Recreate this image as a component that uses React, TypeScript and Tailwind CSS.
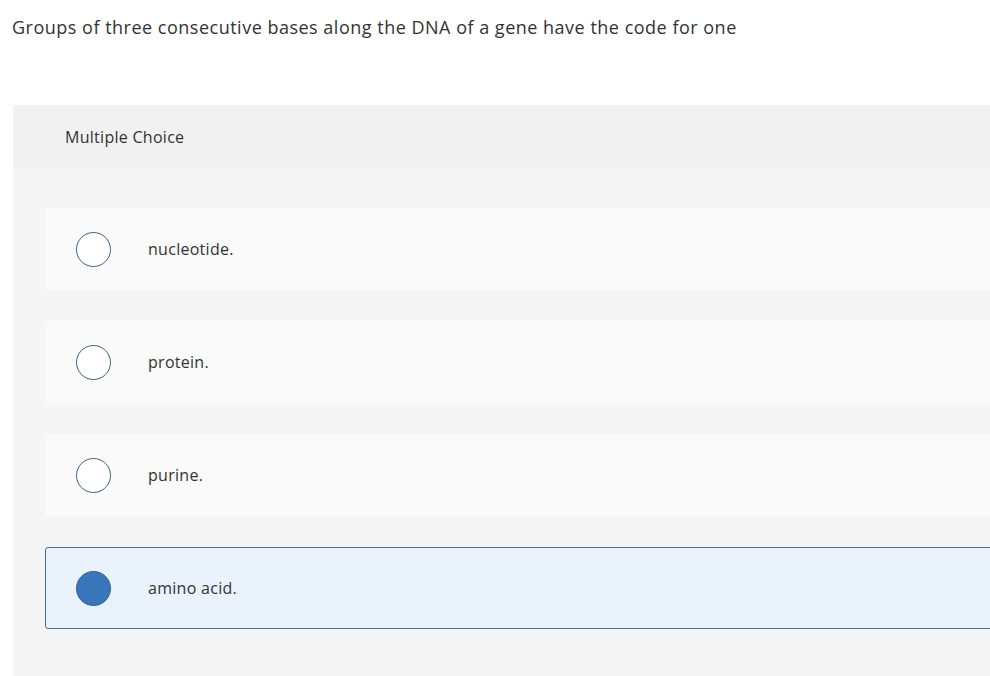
import React from "react";

const options = [
  { label: "nucleotide.", selected: false },
  { label: "protein.", selected: false },
  { label: "purine.", selected: false },
  { label: "amino acid.", selected: true },
];

export default function App() {
  return (
    <div
      className="w-[990px] h-[676px] overflow-hidden bg-white text-[#333]"
      style={{ fontFamily: "'Open Sans', Lato, sans-serif" }}
    >
      <div className="pl-[12px] pt-[14px] text-[18px] leading-[26px] tracking-[0.5px] text-[#333] whitespace-nowrap">
        Groups of three consecutive bases along the DNA of a gene have the code for one
      </div>
      <div className="ml-[13px] mt-[65px] w-[1000px] bg-[#f5f5f5] pb-[60px]">
        <div className="h-[63px] bg-[#f1f1f1] pl-[52px] flex items-center text-[16px] tracking-[0.28px] text-[#333]">
          Multiple Choice
        </div>
        <div className="pl-[32px] pt-[40px] flex flex-col gap-[31px]">
          {options.map((o) => (
            <div
              key={o.label}
              className={
                o.selected
                  ? "h-[82px] flex items-center rounded-[3px] border border-[#4a6f96] bg-[#eaf2fb]"
                  : "h-[82px] flex items-center bg-[#fafafa]"
              }
            >
              <div
                className={
                  o.selected
                    ? "ml-[30px] w-[35px] h-[35px] rounded-full bg-[#3a76bb] border border-[#2f5f99]"
                    : "ml-[31px] w-[35px] h-[35px] rounded-full bg-white border-[1.5px] border-[#3f6187]"
                }
              />
              <div className="ml-[37px] text-[16px] tracking-[0.28px] text-[#333]">{o.label}</div>
            </div>
          ))}
        </div>
      </div>
    </div>
  );
}
